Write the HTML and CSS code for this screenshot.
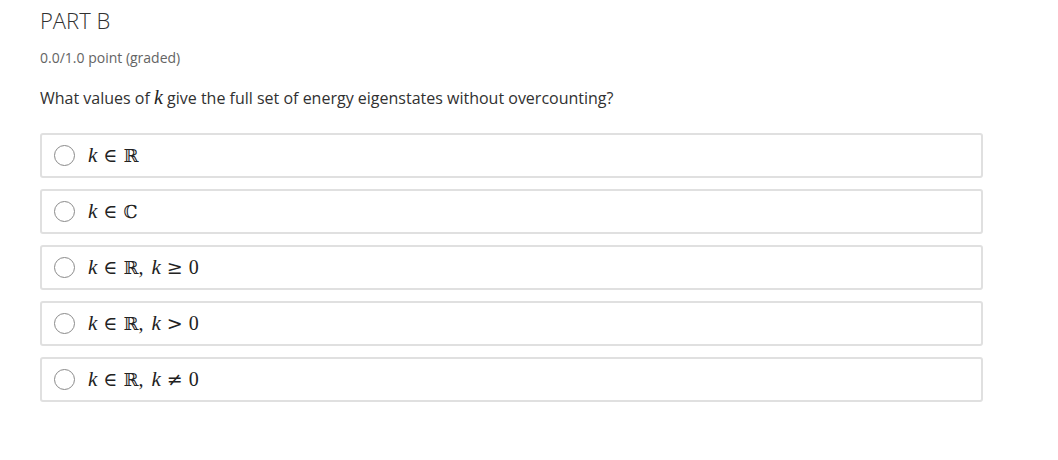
FILE: index.html
```html
<!DOCTYPE html>
<html>
<head>
<meta charset="utf-8">
<link rel="stylesheet" href="styles.css">
</head>
<body>
<div class="problem">
  <h3 class="title">PART B</h3>
  <div class="points">0.0/1.0 point (graded)</div>
  <p class="question">What values of <span class="mi">k</span> give the full set of energy eigenstates without overcounting?</p>
  <div class="choices">
    <label class="choice"><span class="radio"></span><span class="math"><i>k</i><span class="rel">∈</span><span class="bb">ℝ</span></span></label>
    <label class="choice"><span class="radio"></span><span class="math"><i>k</i><span class="rel">∈</span><span class="bb">ℂ</span></span></label>
    <label class="choice"><span class="radio"></span><span class="math"><i>k</i><span class="rel">∈</span><span class="bb">ℝ</span><span class="sep">,</span><i>k</i><span class="rel">≥</span>0</span></label>
    <label class="choice"><span class="radio"></span><span class="math"><i>k</i><span class="rel">∈</span><span class="bb">ℝ</span><span class="sep">,</span><i>k</i><span class="rel">&gt;</span>0</span></label>
    <label class="choice"><span class="radio"></span><span class="math"><i>k</i><span class="rel">∈</span><span class="bb">ℝ</span><span class="sep">,</span><i>k</i><span class="rel">≠</span>0</span></label>
  </div>
</div>
</body>
</html>
```
FILE: styles.css
```css
html, body {
  margin: 0;
  padding: 0;
  background: #fff;
}
body {
  font-family: "Open Sans", sans-serif;
  color: #313131;
}
.problem {
  padding: 7px 75px 0 40px;
}
.title {
  margin: 0;
  font-size: 22px;
  font-weight: 300;
  line-height: 26px;
  color: #313131;
}
.points {
  margin-top: 16px;
  font-size: 14px;
  line-height: 18px;
  color: #646464;
}
.question {
  margin: 20px 0 0;
  font-size: 16px;
  line-height: 22px;
  height: 22px;
  color: #313131;
}
.mi {
  font-family: "Liberation Serif", serif;
  font-style: italic;
  font-size: 20px;
  line-height: 1;
  color: #222;
}
.choices {
  margin-top: 24px;
  display: flex;
  flex-direction: column;
  gap: 11px;
}
.choice {
  display: flex;
  align-items: center;
  height: 41px;
  border: 2px solid #e0e0e0;
  border-radius: 3px;
  padding-left: 12px;
}
.radio {
  width: 21px;
  height: 21px;
  border: 1px solid #8a8a8a;
  border-radius: 50%;
  box-sizing: border-box;
  margin-right: 13px;
}
.math {
  display: flex;
  align-items: baseline;
  font-family: "Liberation Serif", "DejaVu Serif", serif;
  font-size: 20px;
  color: #222;
}
.math i {
  font-style: italic;
  font-family: "Liberation Serif", serif;
  font-size: 21px;
}
.rel {
  margin: 0 6px;
  font-family: "DejaVu Serif", serif;
  font-size: 19px;
  font-weight: 300;
}
.sep {
  margin-right: 8px;
}
.bb {
  font-family: "DejaVu Serif", serif;
  font-size: 18px;
  font-weight: 300;
}
```
